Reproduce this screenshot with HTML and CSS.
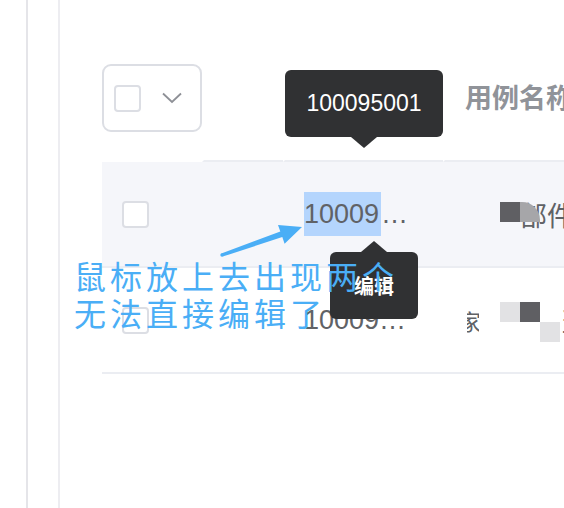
FILE: index.html
```html
<!DOCTYPE html>
<html lang="zh-CN">
<head>
  <meta charset="UTF-8">
  <meta name="viewport" content="width=device-width, initial-scale=1.0">
  <title>用例列表</title>
  <link rel="stylesheet" href="styles.css">
</head>
<body>
  <div class="rail">
    <div class="panel">
      <div class="content">
        <div class="thead">
          <div class="th th-select">
            <div class="select-box">
              <span class="check"></span>
              <svg class="chevron" width="20" height="12" viewBox="0 0 20 12">
                <polyline points="1,1.5 10,10 19,1.5" fill="none" stroke="#8e9096" stroke-width="1.8"/>
              </svg>
            </div>
          </div>
          <div class="th th-line"></div>
          <div class="th th-line th-id">
            <div class="tip tip-top">100095001</div>
          </div>
          <div class="th th-line th-name">用例名称</div>
        </div>

        <div class="row row-hover">
          <div class="td td-select"><span class="check"></span></div>
          <div class="td"></div>
          <div class="td td-id">
            <span class="picked">10009</span>…
            <div class="tip tip-bottom">编辑</div>
          </div>
          <div class="td td-name">
            <span class="name-text">部件</span>
            <span class="mosaic dark" style="left:57px;top:40px"></span>
            <span class="mosaic mid" style="left:77px;top:40px"></span>
          </div>
        </div>

        <div class="row">
          <div class="td td-select"><span class="check"></span></div>
          <div class="td"></div>
          <div class="td td-id">10009…</div>
          <div class="td td-name">
            <span class="frag">家</span>
            <span class="name-tail">当</span>
            <span class="mosaic light" style="left:57px;top:34px"></span>
            <span class="mosaic dark" style="left:77px;top:34px"></span>
            <span class="mosaic light" style="left:97px;top:54px"></span>
          </div>
        </div>
      </div>
    </div>
  </div>

  <div class="note">鼠标放上去出现两个<br>无法直接编辑了</div>
  <svg class="note-arrow" width="564" height="508" viewBox="0 0 564 508">
    <polygon points="221.3,253.4 280.3,231.5 278,224.9 302,227 284.6,243.7 282.3,237.1 222.7,256.6" fill="#4aaef6"/>
    <circle cx="222" cy="255" r="1.7" fill="#4aaef6"/>
  </svg>
</body>
</html>
```

FILE: styles.css
```css
:root {
  --line: #ebedf2;
  --text: #606266;
  --muted: #909399;
  --tip-bg: #303133;
  --note: #4aaef6;
}
* {
  box-sizing: border-box;
}
body {
  margin: 0;
  position: relative;
  width: 564px;
  height: 508px;
  overflow: hidden;
  background: #fff;
  font-family: "Liberation Sans", "Noto Sans CJK SC", sans-serif;
  color: var(--text);
}
.rail {
  margin-left: 26px;
  border-left: 2px solid #e5e5e9;
  height: 508px;
}
.panel {
  margin-left: 30px;
  border-left: 2px solid #ededf1;
  height: 100%;
}
.content {
  padding: 64px 0 0 42px;
  width: 700px;
}

/* table grid */
.thead,
.row {
  display: grid;
  grid-template-columns: 100px 81px 160px 1fr;
}
.thead {
  height: 98px;
}
.th {
  position: relative;
}
.th-line {
  border-bottom: 2px solid var(--line);
  border-left: 2px solid #fff;
}
.th-name {
  padding: 16px 0 0 20px;
  font-size: 27px;
  line-height: 38px;
  font-weight: bold;
  color: var(--muted);
  white-space: nowrap;
}
.select-box {
  width: 100px;
  height: 68px;
  border: 2px solid #dcdee4;
  border-radius: 9px;
  display: flex;
  align-items: center;
  padding-left: 10px;
  gap: 21px;
}
.chevron {
  display: block;
}
.check {
  display: inline-block;
  width: 27px;
  height: 27px;
  border: 2px solid #dcdee4;
  border-radius: 4px;
  background: #fff;
}

.row {
  height: 106px;
  border-bottom: 2px solid var(--line);
}
.row-hover {
  background: #f5f6fa;
}
.td {
  position: relative;
  display: flex;
  align-items: center;
}
.td-select {
  padding-left: 20px;
}
.td-id {
  padding-left: 21px;
  font-size: 27px;
  white-space: nowrap;
}
.picked {
  display: inline-block;
  line-height: 44px;
  background: #b4d5fd;
  padding-right: 2px;
}
.td-name {
  font-size: 27px;
  white-space: nowrap;
  color: var(--text);
}
.name-text {
  margin-left: 77px;
}
.frag {
  display: inline-block;
  width: 12px;
  margin-left: 24px;
  overflow: hidden;
  font-size: 22px;
  text-indent: -8px;
}
.name-tail {
  margin-left: 81px;
}
.mosaic {
  position: absolute;
  width: 20px;
  height: 20px;
}
.mosaic.dark {
  background: #5f5f63;
}
.mosaic.mid {
  background: #a6a6a9;
  border-top-right-radius: 18px;
}
.mosaic.light {
  background: #e2e2e4;
}

/* tooltips */
.tip {
  position: absolute;
  background: var(--tip-bg);
  color: #fff;
  border-radius: 6px;
  display: flex;
  align-items: center;
  justify-content: center;
  z-index: 2;
}
.tip::after {
  content: "";
  position: absolute;
  left: 50%;
  margin-left: -13px;
  border: 13px solid transparent;
}
.tip-top {
  left: 0;
  top: 6px;
  width: 158px;
  height: 67px;
  font-size: 23px;
}
.tip-top::after {
  top: 100%;
  border-top: 11px solid var(--tip-bg);
  border-bottom: 0;
}
.tip-bottom {
  left: 47px;
  top: 90px;
  width: 88px;
  height: 67px;
  font-size: 20px;
  font-weight: bold;
}
.tip-bottom::after {
  bottom: 100%;
  border-bottom: 11px solid var(--tip-bg);
  border-top: 0;
}

/* annotation drawn on the screenshot */
.note {
  position: absolute;
  left: 74px;
  top: 257px;
  font-size: 32px;
  line-height: 37px;
  letter-spacing: 4px;
  color: var(--note);
  font-family: "Noto Sans CJK SC", sans-serif;
  white-space: nowrap;
  z-index: 5;
}
.note-arrow {
  position: absolute;
  left: 0;
  top: 0;
  z-index: 5;
}
```
